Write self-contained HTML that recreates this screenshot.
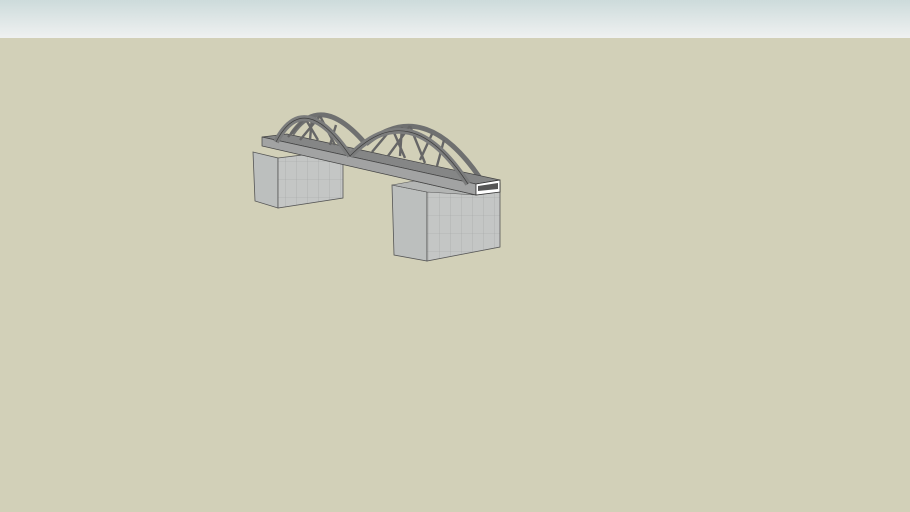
<!DOCTYPE html>
<html><head><style>
html,body{margin:0;padding:0;width:910px;height:512px;overflow:hidden;background:#d2d0b8}
#sky{position:absolute;left:0;top:0;width:910px;height:38px;background:linear-gradient(#cddbdb,#eff1f1)}
svg{position:absolute;left:0;top:0}
</style></head><body>
<div id="sky"></div>
<svg width="910" height="512" viewBox="0 0 910 512">
<defs>
<pattern id="c" width="11" height="18" patternUnits="userSpaceOnUse">
<rect width="11" height="18" fill="#c4c6c5"/><path d="M11 0V18M0 18H11" stroke="#a3a6a5" stroke-width="0.6"/>
</pattern>
</defs>
<!-- left pier -->
<polygon points="253,152 278,158 278,208 255,201" fill="#bcbfbe" stroke="#555" stroke-width="0.8"/>
<polygon points="278,158 343,150 343,198 278,208" fill="url(#c)" stroke="#555" stroke-width="0.8"/>
<!-- right pier -->
<polygon points="392,185 427,192 427,261 394,255" fill="#bcbfbe" stroke="#555" stroke-width="0.8"/>
<polygon points="427,192 500,183 500,247 427,261" fill="url(#c)" stroke="#555" stroke-width="0.8"/>
<polygon points="392,185 414,181 476,195 427,192" fill="#b3b5b4" stroke="#555" stroke-width="0.6"/>
<!-- back arches -->
<g fill="none" stroke="#6f7070" stroke-width="5">
<path d="M292,134 Q320,92 364,142"/>
<path d="M366,144 Q424,96 480,178"/>
</g>
<!-- deck -->
<polygon points="262,137 287,134 500,180 476,184" fill="#858686" stroke="#444" stroke-width="0.7"/>
<polygon points="262,137 476,184 476,195 262,146" fill="#a2a3a3" stroke="#444" stroke-width="0.7"/>
<polygon points="476,184 500,180 500,192 476,195" fill="#fff" stroke="#333" stroke-width="0.8"/>
<polygon points="478,186 498,183 498,189 478,191" fill="#555"/>
<!-- truss members -->
<g stroke="#666" stroke-width="2.4">
<path d="M288,137 L305,118 M300,140 L320,116 M305,118 L318,140 M320,116 L335,145 M310,140 L312,117 M336,125 L330,145"/>
<path d="M372,152 L392,128 M388,156 L410,126 M392,128 L405,158 M410,126 L425,163 M400,156 L402,127 M432,134 L420,160 M444,140 L437,166"/>
</g>
<!-- front arches -->
<g fill="none" stroke="#7b7c7c" stroke-width="6">
<path d="M276,142 Q304,88 350,156"/>
<path d="M350,156 Q410,94 468,184"/>
</g>
<g fill="none" stroke="#3e3e3e" stroke-width="0.7">
<path d="M276,142 Q304,88 350,156"/>
<path d="M350,156 Q410,94 468,184"/>
</g>
</svg>
</body></html>
